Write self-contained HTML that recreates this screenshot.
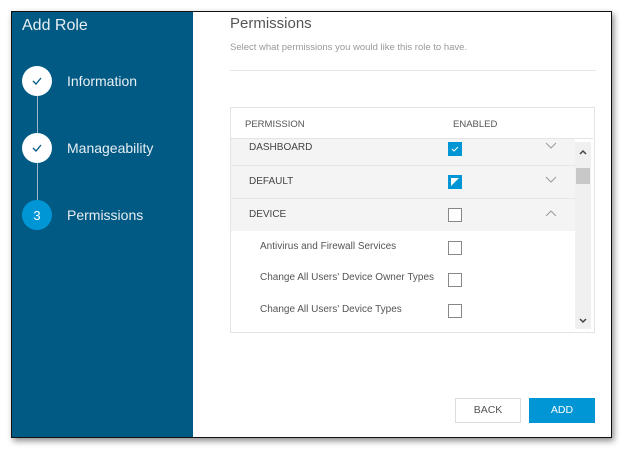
<!DOCTYPE html>
<html><head><style>
body{margin:0;width:623px;height:452px;background:#fff;font-family:"Liberation Sans",sans-serif;position:relative;overflow:hidden}
.win{position:absolute;left:11px;top:11px;width:599px;height:425px;border:1px solid #111;box-shadow:2px 3px 6px rgba(0,0,0,.45);background:#fff;overflow:hidden}
.side{position:absolute;left:0;top:0;width:181px;height:100%;background:#005a84;color:#e8eef2}
.t{position:absolute;white-space:nowrap}
.circ{position:absolute;left:10px;width:30px;height:30px;border-radius:50%;background:#fff;display:flex;align-items:center;justify-content:center;color:#fff;font-size:13px}
.vl{position:absolute;left:25px;width:1px;background:#9fb8c8}
.cb{position:absolute;left:436px;width:12px;height:12px;border:1px solid #888;background:#fff}
.row{position:absolute;left:219px;width:344px;font-size:10px;color:#444}
.chev{position:absolute;left:533px;color:#888}
</style></head><body>
<div class="win">
<div class="side">
<div class="t" style="left:10px;top:5px;font-size:16px">Add Role</div>
<div class="vl" style="top:84px;height:40px"></div>
<div class="vl" style="top:150px;height:40px"></div>
<div class="circ" style="top:54px"><svg width="10" height="8"><path d="M1 4l3 3 5-6" fill="none" stroke="#005a84" stroke-width="1.3"/></svg></div>
<div class="circ" style="top:121px"><svg width="10" height="8"><path d="M1 4l3 3 5-6" fill="none" stroke="#005a84" stroke-width="1.3"/></svg></div>
<div class="circ" style="top:188px;background:#0096d6">3</div>
<div class="t" style="left:55px;top:61px;font-size:14px">Information</div>
<div class="t" style="left:55px;top:128px;font-size:14px">Manageability</div>
<div class="t" style="left:55px;top:195px;font-size:14px">Permissions</div>
</div>
<div class="t" style="left:218px;top:3px;font-size:15px;color:#555">Permissions</div>
<div class="t" style="left:218px;top:30px;font-size:9.5px;color:#999">Select what permissions you would like this role to have.</div>
<div style="position:absolute;left:218px;top:58px;width:366px;height:1px;background:#e6e6e6"></div>
<div style="position:absolute;left:218px;top:95px;width:363px;height:224px;border:1px solid #e4e4e4"></div>
<div class="t" style="left:233px;top:107px;font-size:9.5px;color:#555">PERMISSION</div>
<div class="t" style="left:441px;top:107px;font-size:9.5px;color:#555">ENABLED</div>
<div style="position:absolute;left:219px;top:126px;width:362px;height:1px;background:#e4e4e4"></div>
<div class="row" style="top:127px;height:26px;background:#f4f4f4;border-bottom:1px solid #e6e6e6"><span class="t" style="left:18px;top:3px">DASHBOARD</span></div>
<div class="row" style="top:154px;height:32px;background:#f4f4f4;border-bottom:1px solid #e6e6e6"><span class="t" style="left:18px;top:10px">DEFAULT</span></div>
<div class="row" style="top:187px;height:32px;background:#f4f4f4"><span class="t" style="left:18px;top:10px">DEVICE</span></div>
<div class="t" style="left:248px;top:229px;font-size:10px;color:#555">Antivirus and Firewall Services</div>
<div class="t" style="left:248px;top:260px;font-size:10px;color:#555">Change All Users' Device Owner Types</div>
<div class="t" style="left:248px;top:292px;font-size:10px;color:#555">Change All Users' Device Types</div>
<div class="cb" style="top:130px;background:#0096d6;border-color:#0096d6"><svg width="12" height="12" style="position:absolute;left:0;top:0"><path d="M3 6l2 2 4-4" fill="none" stroke="#fff" stroke-width="1"/></svg></div>
<div class="cb" style="top:163px;background:#0096d6;border-color:#0096d6"><svg width="12" height="12" style="position:absolute;left:0;top:0"><path d="M2 10L10 2H2z" fill="#fff"/></svg></div>
<div class="cb" style="top:196px"></div>
<div class="cb" style="top:229px"></div>
<div class="cb" style="top:261px"></div>
<div class="cb" style="top:292px"></div>
<svg class="chev" style="top:130px" width="12" height="8"><path d="M1 1l5 5 5-5" fill="none" stroke="#999"/></svg>
<svg class="chev" style="top:164px" width="12" height="8"><path d="M1 1l5 5 5-5" fill="none" stroke="#999"/></svg>
<svg class="chev" style="top:197px" width="12" height="8"><path d="M1 7l5-5 5 5" fill="none" stroke="#999"/></svg>
<div style="position:absolute;left:563px;top:130px;width:16px;height:187px;background:#f0f0f0"></div>
<div style="position:absolute;left:564px;top:156px;width:14px;height:16px;background:#c8c8c8"></div>
<svg style="position:absolute;left:567px;top:137px" width="8" height="6"><path d="M1 5l3-3 3 3" fill="none" stroke="#444" stroke-width="1.5"/></svg>
<svg style="position:absolute;left:567px;top:306px" width="8" height="6"><path d="M1 1l3 3 3-3" fill="none" stroke="#444" stroke-width="1.5"/></svg>
<div style="position:absolute;left:443px;top:386px;width:64px;height:23px;border:1px solid #ddd;color:#555;font-size:10.5px;text-align:center;line-height:23px">BACK</div>
<div style="position:absolute;left:517px;top:386px;width:66px;height:25px;background:#0096d6;color:#fff;font-size:10.5px;text-align:center;line-height:25px">ADD</div>
</div>
</body></html>
